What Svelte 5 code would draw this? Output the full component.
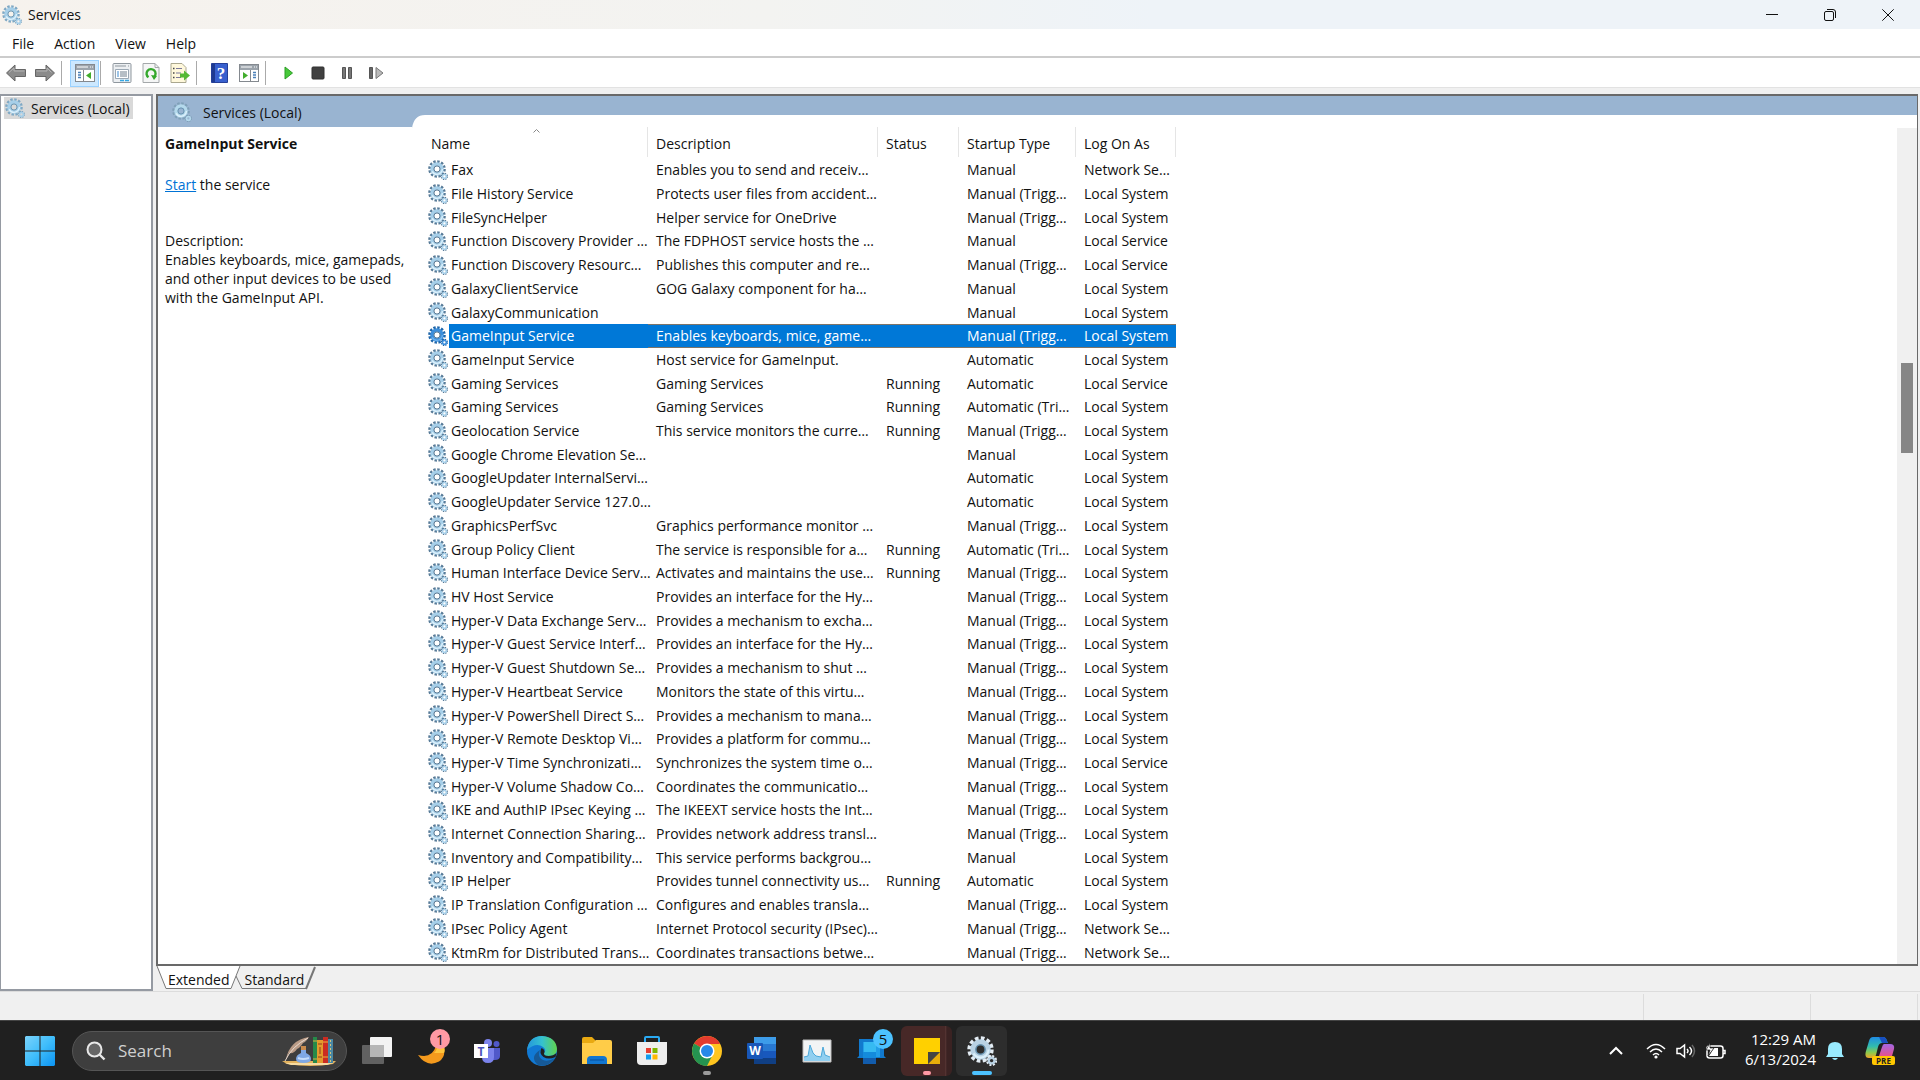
<script>
	const services = [
		['Fax', 'Enables you to send and receiv…', '', 'Manual', 'Network Se…'],
		['File History Service', 'Protects user files from accident…', '', 'Manual (Trigg…', 'Local System'],
		['FileSyncHelper', 'Helper service for OneDrive', '', 'Manual (Trigg…', 'Local System'],
		['Function Discovery Provider …', 'The FDPHOST service hosts the …', '', 'Manual', 'Local Service'],
		['Function Discovery Resourc…', 'Publishes this computer and re…', '', 'Manual (Trigg…', 'Local Service'],
		['GalaxyClientService', 'GOG Galaxy component for ha…', '', 'Manual', 'Local System'],
		['GalaxyCommunication', '', '', 'Manual', 'Local System'],
		['GameInput Service', 'Enables keyboards, mice, game…', '', 'Manual (Trigg…', 'Local System'],
		['GameInput Service', 'Host service for GameInput.', '', 'Automatic', 'Local System'],
		['Gaming Services', 'Gaming Services', 'Running', 'Automatic', 'Local Service'],
		['Gaming Services', 'Gaming Services', 'Running', 'Automatic (Tri…', 'Local System'],
		['Geolocation Service', 'This service monitors the curre…', 'Running', 'Manual (Trigg…', 'Local System'],
		['Google Chrome Elevation Se…', '', '', 'Manual', 'Local System'],
		['GoogleUpdater InternalServi…', '', '', 'Automatic', 'Local System'],
		['GoogleUpdater Service 127.0…', '', '', 'Automatic', 'Local System'],
		['GraphicsPerfSvc', 'Graphics performance monitor …', '', 'Manual (Trigg…', 'Local System'],
		['Group Policy Client', 'The service is responsible for a…', 'Running', 'Automatic (Tri…', 'Local System'],
		['Human Interface Device Serv…', 'Activates and maintains the use…', 'Running', 'Manual (Trigg…', 'Local System'],
		['HV Host Service', 'Provides an interface for the Hy…', '', 'Manual (Trigg…', 'Local System'],
		['Hyper-V Data Exchange Serv…', 'Provides a mechanism to excha…', '', 'Manual (Trigg…', 'Local System'],
		['Hyper-V Guest Service Interf…', 'Provides an interface for the Hy…', '', 'Manual (Trigg…', 'Local System'],
		['Hyper-V Guest Shutdown Se…', 'Provides a mechanism to shut …', '', 'Manual (Trigg…', 'Local System'],
		['Hyper-V Heartbeat Service', 'Monitors the state of this virtu…', '', 'Manual (Trigg…', 'Local System'],
		['Hyper-V PowerShell Direct S…', 'Provides a mechanism to mana…', '', 'Manual (Trigg…', 'Local System'],
		['Hyper-V Remote Desktop Vi…', 'Provides a platform for commu…', '', 'Manual (Trigg…', 'Local System'],
		['Hyper-V Time Synchronizati…', 'Synchronizes the system time o…', '', 'Manual (Trigg…', 'Local Service'],
		['Hyper-V Volume Shadow Co…', 'Coordinates the communicatio…', '', 'Manual (Trigg…', 'Local System'],
		['IKE and AuthIP IPsec Keying …', 'The IKEEXT service hosts the Int…', '', 'Manual (Trigg…', 'Local System'],
		['Internet Connection Sharing…', 'Provides network address transl…', '', 'Manual (Trigg…', 'Local System'],
		['Inventory and Compatibility…', 'This service performs backgrou…', '', 'Manual', 'Local System'],
		['IP Helper', 'Provides tunnel connectivity us…', 'Running', 'Automatic', 'Local System'],
		['IP Translation Configuration …', 'Configures and enables transla…', '', 'Manual (Trigg…', 'Local System'],
		['IPsec Policy Agent', 'Internet Protocol security (IPsec)…', '', 'Manual (Trigg…', 'Network Se…'],
		['KtmRm for Distributed Trans…', 'Coordinates transactions betwe…', '', 'Manual (Trigg…', 'Network Se…']
	];

	const columns = ['Name', 'Description', 'Status', 'Startup Type', 'Log On As'];
	const menus = ['File', 'Action', 'View', 'Help'];

	let selected = $state(7);
	let tab = $state('Extended');
</script>

{#snippet gears(kind)}
	<svg class="gears {kind}" viewBox="0 0 20 20" aria-hidden="true">
		<circle class="teeth" cx="9" cy="9" r="7.2" stroke-width="3.2" stroke-dasharray="2.3 1.47" />
		<circle class="wheel" cx="9" cy="9" r="5" stroke-width="3.6" />
		<circle class="shine" cx="9" cy="9" r="5.4" stroke-width="1.4" stroke-dasharray="14 20" />
		<circle class="rim" cx="9" cy="9" r="3.1" stroke-width="1" />
		<circle class="teeth" cx="16.4" cy="16.4" r="2.9" stroke-width="1.6" stroke-dasharray="1.3 .98" />
		<circle class="wheel" cx="16.4" cy="16.4" r="1.9" stroke-width="1.5" />
	</svg>
{/snippet}

<div class="window">
	<header class="titlebar">
		<div class="title">{@render gears('')}<span>Services</span></div>
		<div class="controls">
			<button aria-label="Minimize"><svg width="12" height="12" viewBox="0 0 12 12"><path d="M0 5.5h12" /></svg></button>
			<button aria-label="Restore"
				><svg width="12" height="12" viewBox="0 0 12 12"
					><rect x=".5" y="2.5" width="9" height="9" rx="1.5" /><path d="M3 .5h6a2.5 2.5 0 0 1 2.5 2.5v6" /></svg
				></button
			>
			<button aria-label="Close"><svg width="12" height="12" viewBox="0 0 12 12"><path d="M.3.3l11.4 11.4M11.7.3L.3 11.7" /></svg></button>
		</div>
	</header>

	<nav class="menubar">
		{#each menus as menu}
			<button>{menu}</button>
		{/each}
	</nav>

	<div class="toolbar">
		<button aria-label="Back">
			<svg width="22" height="20" viewBox="0 0 22 20"><path d="M1.5 10L10 2v4.500h10.500v7H10V18z" fill="#8b8b8b" stroke="#666" /><path d="M4 9.500L9 5v3h10.500" fill="none" stroke="#b5b5b5" /></svg>
		</button>
		<button aria-label="Forward">
			<svg width="22" height="20" viewBox="0 0 22 20"><path d="M20.500 10L12 2v4.500H1.500v7H12V18z" fill="#8b8b8b" stroke="#666" /><path d="M2.500 8H13V5l4.500 4.500" fill="none" stroke="#b5b5b5" /></svg>
		</button>
		<i class="sep"></i>
		<button class="pressed" aria-label="Show console tree">
			<svg width="20" height="18" viewBox="0 0 20 18"><rect x=".5" y=".5" width="19" height="17" fill="#fff" stroke="#84898f" /><path d="M1 1h18v5H1z" fill="#9ca4ac" /><path d="M2 3h11M15 3h1M17 3h1" stroke="#fff" /><path d="M3 8.500h3M3 11h3M3 13.500h3" stroke="#4a7fb8" stroke-width="1.400" /><path d="M8.500 6v11" stroke="#84898f" /><path d="M16 8v7l-5-3.500z" fill="#41ad2c" /></svg>
		</button>
		<i class="sep tight"></i>
		<button aria-label="Properties">
			<svg width="20" height="20" viewBox="0 0 20 20"><rect x="1" y=".5" width="18" height="19" rx="1" fill="#eceff2" stroke="#8f979e" /><path d="M3 3h11M16 3h1" stroke="#8f979e" /><path d="M3.500 6.500h13v9h-13z" fill="#fff" stroke="#9ba8b4" /><path d="M5 9h2M5 11h2M5 13h2" stroke="#3a89cf" /><path d="M8 9h7M8 11h7M8 13h7" stroke="#6f7e8c" /><path d="M8 17.500h4M13 17.500h4" stroke="#35a7e3" stroke-width="1.500" /></svg>
		</button>
		<button aria-label="Refresh">
			<svg width="18" height="20" viewBox="0 0 18 20"><path d="M1 .5h12l4 4v15H1z" fill="#f5f6f6" stroke="#a4a8aa" /><path d="M13 .5v4h4" fill="none" stroke="#a4a8aa" /><path d="M6.500 14.300A4.500 4.500 0 1 1 12 14" fill="none" stroke="#35a82d" stroke-width="2.400" /><path d="M9 12l6 1-3 4z" fill="#35a82d" /></svg>
		</button>
		<button aria-label="Export list">
			<svg width="20" height="20" viewBox="0 0 20 20"><path d="M1 .5h11l4 4v15H1z" fill="#fff8dc" stroke="#aaa78f" /><path d="M3 5.500h1.500M3 10h1.500M3 14.500h1.500" stroke="#444" stroke-width="1.400" /><path d="M6 5.500h6M6 10h5M6 14.500h5" stroke="#7b789b" stroke-width="1.200" /><path d="M10 10.500h4v-3l6 5-6 5v-3h-4z" fill="#55b935" /></svg>
		</button>
		<i class="sep"></i>
		<button aria-label="Help">
			<svg width="17" height="20" viewBox="0 0 17 20"><path d="M.5.5h16v19H.5z" fill="#3860ce" stroke="#253f98" /><path d="M1 1h3v18H1z" fill="#1e3a91" /><text x="10" y="16" text-anchor="middle" class="q">?</text></svg>
		</button>
		<button aria-label="Show action pane">
			<svg width="20" height="18" viewBox="0 0 20 18"><rect x=".5" y=".5" width="19" height="17" fill="#fff" stroke="#84898f" /><path d="M1 1h18v5H1z" fill="#9ca4ac" /><path d="M2 3h11M15 3h1M17 3h1" stroke="#fff" /><path d="M14 8.500h3M14 11h3M14 13.500h3" stroke="#4a7fb8" stroke-width="1.400" /><path d="M11.500 6v11" stroke="#84898f" /><path d="M4 8v7l5-3.500z" fill="#41ad2c" /></svg>
		</button>
		<i class="sep"></i>
		<button aria-label="Start service"><svg width="12" height="14" viewBox="0 0 12 14"><path d="M2 1v12l7.500-6z" fill="#47c93a" stroke="#2b9e25" /></svg></button>
		<button aria-label="Stop service"><svg width="14" height="14" viewBox="0 0 14 14"><rect x="1" y="1" width="12" height="12" rx="1" fill="#404040" stroke="#303030" /></svg></button>
		<button aria-label="Pause service"><svg width="12" height="14" viewBox="0 0 12 14"><path d="M1.500 1.500h3v11h-3zM7.500 1.500h3v11h-3z" fill="#777" stroke="#555" /></svg></button>
		<button aria-label="Restart service"><svg width="16" height="14" viewBox="0 0 16 14"><path d="M1.500 1.500h3v11h-3z" fill="#666" stroke="#555" /><path d="M8 1.500v11l7-5.500z" fill="#bbb" stroke="#777" /></svg></button>
	</div>

	<main>
		<aside class="tree">
			<button>{@render gears('')}<span>Services (Local)</span></button>
		</aside>

		<section class="content">
			<div class="pane">
				<div class="band">{@render gears('light')}<span>Services (Local)</span></div>
				<div class="details">
					<h1>GameInput Service</h1>
					<p class="action"><a href="#start">Start</a> the service</p>
					<p>Description:<br />Enables keyboards, mice, gamepads, and other input devices to be used with the GameInput API.</p>
				</div>
				<div class="list">
					<svg class="corner" width="13" height="13" viewBox="0 0 13 13" aria-hidden="true"><path d="M0 0h13Q2 0 0 13z" /></svg>
					<table>
						<thead>
							<tr>
								{#each columns as column, i}
									<th class="c{i}">
										{column}
										{#if i === 0}
											<svg class="sort" width="7" height="4" viewBox="0 0 7 4"><path d="M.5 3.500l3-3 3 3" /></svg>
										{/if}
									</th>
								{/each}
							</tr>
						</thead>
						<tbody>
							{#each services as service, row}
								<tr class:selected={selected === row} onclick={() => (selected = row)}>
									{#each service as value, i}
										<td>
											{#if i === 0}
												<div class="name">{@render gears('row')}<span>{value}</span></div>
											{:else}
												{value}
											{/if}
										</td>
									{/each}
								</tr>
							{/each}
						</tbody>
					</table>
					<div class="scrollbar"><div class="thumb"></div></div>
				</div>
			</div>

			<div class="tabs">
				<svg width="320" height="25" viewBox="0 0 320 25" aria-hidden="true">
					<path d="M80 10l6 12.500h64" fill="none" stroke="#777" />
					<path d="M150 23L159 1" fill="none" stroke="#777" stroke-width="2" />
					<path d="M1 0l9 22.500h65L84 0z" fill="#fff" />
					<path d="M1 0l9 22.500h65L84 0" fill="none" stroke="#777" />
				</svg>
				<button aria-pressed={tab === 'Extended'} onclick={() => (tab = 'Extended')}>Extended</button>
				<button aria-pressed={tab === 'Standard'} onclick={() => (tab = 'Standard')}>Standard</button>
			</div>
		</section>
	</main>

	<footer class="status"><i></i><i></i><i></i></footer>

	<div class="taskbar">
		<div class="apps">
			<button class="start" aria-label="Start">
				<svg width="30" height="30" viewBox="0 0 30 30"><defs><linearGradient id="win" x2="1" y2="1"><stop stop-color="#7bd3fb" /><stop offset=".5" stop-color="#3fbdfb" /><stop offset="1" stop-color="#0b93f2" /></linearGradient></defs><path d="M1 0h13.500v14.500H0V1zM15.500 0H29l1 1v13.500H15.500zM0 15.500h14.500V30H1l-1-1zM15.500 15.500H30V29l-1 1H15.500z" fill="url(#win)" /></svg>
			</button>
			<label class="search">
				<svg width="20" height="20" viewBox="0 0 20 20" fill="none"><circle cx="8.500" cy="8.500" r="7" fill="#666" stroke="#e8e8e8" stroke-width="2" /><path d="M13.500 13.500l5 5" stroke="#e8e8e8" stroke-width="2.400" /></svg>
				<input type="text" placeholder="Search" aria-label="Search" />
				<svg width="57" height="32" viewBox="0 0 57 32">
					<path d="M1 26h54l-3 3q-22 4-46 0z" fill="#e3b25e" /><path d="M4 28h48l-6 2H10z" fill="#f7dba1" />
					<path d="M5 24Q9 5 28 2q-3 5-6 6-3 5-6 6-3 5-8 4z" fill="#b99b86" /><path d="M4 26Q11 11 27 3" fill="none" stroke="#eadbd0" />
					<path d="M20 14h5v4q5 2 5 6 0 4-7.500 4T15 24q0-4 5-6z" fill="#7fa8e5" /><path d="M17 23q5 2 11 0" stroke="#c5dcfa" stroke-width="2" fill="none" /><path d="M20 11h5v4h-5z" fill="#c98b4d" />
					<path d="M32 2h4v26h-4z" fill="#268a49" /><path d="M32 6h4M32 24h4" stroke="#d8b042" /><path d="M36 5h6v23h-6z" fill="#e39a2d" /><path d="M37 9h4M37 22h4M39 12v7" stroke="#8f3c18" /><path d="M42 2h5v26h-5z" fill="#cb2c22" /><path d="M42 7h5M42 22h5" stroke="#eeb33d" /><path d="M47 4h5v24h-5z" fill="#4a88a4" /><path d="M49.500 5v22" stroke="#d6c37d" stroke-dasharray="2 2" />
				</svg>
			</label>
			<button aria-label="Task view"><svg width="32" height="30" viewBox="0 0 32 30"><rect x="9" y="1" width="22" height="20" rx="1" fill="#f3f3f3" /><rect x="1" y="9" width="22" height="19" rx="1" fill="#777" fill-opacity=".75" /><path d="M9 9h14v12H9z" fill="#b6b6b6" /></svg></button>
			<button aria-label="Weather"><svg width="30" height="30" viewBox="0 0 30 30"><path d="M26 9Q30 20 22 25.500 10 32 1 19q14 4 18-9z" fill="#f49a1d" /><path d="M20 12l6-4q3 6 1 9H17q2-1 3-5z" fill="#ffc43b" /></svg><b class="badge pink">1</b></button>
			<button aria-label="Teams"><svg width="30" height="30" viewBox="0 0 30 30"><circle cx="16" cy="7" r="4" fill="#7b83eb" /><circle cx="24.500" cy="8" r="3" fill="#5059c9" /><path d="M19 12h9v8q0 4-5 4h-4z" fill="#5059c9" /><path d="M10 12h12v9q0 6-6 6t-6-6z" fill="#7b83eb" /><path d="M2 8h14v14H2z" fill="#fff" /><text x="9" y="20" text-anchor="middle" class="t">T</text></svg></button>
			<button aria-label="Edge"><svg width="30" height="30" viewBox="0 0 30 30"><defs><linearGradient id="edge"><stop stop-color="#2496dc" /><stop offset=".5" stop-color="#35c1d0" /><stop offset="1" stop-color="#61d44c" /></linearGradient></defs><circle cx="15" cy="15" r="15" fill="#1179d4" /><path d="M0 14Q2 0 15 0q14 1 15 13 0 7-8 7-6 0-5-3 3-3-1-6Q9 6 0 14z" fill="url(#edge)" /><path d="M13 14q-3 7 3 10 5 2 12-2-7 10-17 7-9-8 2-15z" fill="#165997" /><path d="M14.500 12q3 1 3 4-2 4 4 4 5 0 8-3l-1 4q-7 3-12 0-5-4-2-9z" fill="#202020" /></svg></button>
			<button aria-label="File Explorer"><svg width="30" height="28" viewBox="0 0 30 28"><path d="M0 2q0-2 2-2h8l4 4h15v7H0z" fill="#e9a911" /><path d="M0 6h11l3-3h14q2 0 2 2v22H0z" fill="#ffcc48" /><path d="M5 27v-4q0-4 4-4h12q4 0 4 4v4z" fill="#1276d0" /><path d="M8 23h14" stroke="#064e9b" /></svg></button>
			<button aria-label="Microsoft Store"><svg width="30" height="30" viewBox="0 0 30 30"><path d="M8 7V2q0-1 1-1h12q1 0 1 1v5" fill="none" stroke="#29a9f2" stroke-width="2" /><path d="M0 6h30v19q0 4-4 4H4q-4 0-4-4z" fill="#eee" /><path d="M9 12h5v5H9z" fill="#e83e30" /><path d="M15.500 12h5v5h-5z" fill="#7db700" /><path d="M9 18.500h5v5H9z" fill="#119def" /><path d="M15.500 18.500h5v5h-5z" fill="#ffb800" /></svg></button>
			<button class="running" aria-label="Chrome"><svg width="30" height="30" viewBox="0 0 30 30"><circle cx="15" cy="15" r="15" fill="#ffc51f" /><path d="M15 15L2 7.500Q7 0 15 0q9 0 13 8H15z" fill="#e33b2e" /><path d="M15 15L2 7.500Q-2 15 2 22.500 6 30 15 30l6-12z" fill="#259350" /><circle cx="15" cy="15" r="7.500" fill="#fff" /><circle cx="15" cy="15" r="6" fill="#2788e8" /></svg></button>
			<button aria-label="Word"><svg width="30" height="28" viewBox="0 0 30 28"><path d="M7 0h22v7H7z" fill="#3d9ce9" /><path d="M7 7h22v7H7z" fill="#2878d1" /><path d="M7 14h22v7H7z" fill="#1858bd" /><path d="M7 21h22v6H7z" fill="#103f84" /><rect y="6" width="16" height="16" rx="1" fill="#1857b8" /><text x="8" y="18" text-anchor="middle" class="w">W</text></svg></button>
			<button aria-label="Resource Monitor"><svg width="30" height="24" viewBox="0 0 30 24"><path d="M1 1h28v22H1z" fill="#f2f4f5" stroke="#bbb" /><path d="M2 18l4-1 2-11 3 8 3 3 5 1 2-10 2 8 5 2v4H2z" fill="#91cff0" /><path d="M2 18l4-1 2-11 3 8 3 3 5 1 2-10 2 8 5 2" fill="none" stroke="#4ca8da" /></svg></button>
			<button aria-label="Phone Link"><svg width="30" height="28" viewBox="0 0 30 28"><path d="M2 2h25v17l2 2H0l2-2z" fill="#1179cd" /><path d="M6 5h17v15H6z" fill="#219ee8" /><path d="M7 5h12v10H7z" fill="#36baf1" /><path d="M6 15h13v7H6z" fill="#148bdc" /><path d="M6 21h13v6H6z" fill="#125cac" /></svg><b class="badge blue">5</b></button>
			<button class="notes" aria-label="Sticky Notes"><svg width="26" height="26" viewBox="0 0 26 26"><path d="M0 0h26v14L14 26H0z" fill="#ffd000" /><path d="M26 14v12H14z" fill="#e9ad0a" /><path d="M14 14h12L14 26z" fill="#444" /></svg></button>
			<button class="active" aria-label="Services">{@render gears('big')}</button>
		</div>

		<div class="tray">
			<button aria-label="Show hidden icons"><svg width="14" height="9" viewBox="0 0 14 9"><path d="M1 8l6-6 6 6" /></svg></button>
			<button class="network" aria-label="Network">
				<svg width="20" height="16" viewBox="0 0 20 16"><path d="M1 6q9-9 18 0M4 9q6-6 12 0M7 12q3-3 6 0" /><circle cx="10" cy="14" r="1.600" fill="#fff" stroke="none" /></svg>
				<svg width="20" height="16" viewBox="0 0 20 16"><path d="M1 5.500h3L8.500 2v12L4 10.500H1zM11 6q2 2 0 4M13.500 4q4 4 0 8" /><path d="M16 2q5 6 0 12" stroke="#666" /></svg>
				<svg width="20" height="16" viewBox="0 0 20 16"><rect x="1" y="3" width="16" height="12" rx="2.500" /><path d="M17 7.500h2v3h-2" /><path d="M8 5h4v8H3z" fill="#fff" stroke="none" /><path d="M4 0L0 7h4l-2 6 6-8H4z" fill="#fff" stroke="#202020" stroke-width=".7" /></svg>
			</button>
			<button class="clock"><time>12:29 AM</time><time>6/13/2024</time></button>
			<button class="bell" aria-label="Notifications"><svg width="18" height="20" viewBox="0 0 18 20"><path d="M2 8q0-7 7-7t7 7v5l2 3H0l2-3z" /><path d="M6 17h6q-3 4-6 0z" /></svg></button>
			<button class="copilot" aria-label="Copilot">
				<svg width="30" height="30" viewBox="0 0 30 30"><defs><linearGradient id="co" x2="0" y2="1"><stop stop-color="#1f8ce5" /><stop offset=".45" stop-color="#32bcad" /><stop offset=".75" stop-color="#90c94a" /><stop offset="1" stop-color="#f0a42a" /></linearGradient><linearGradient id="co2" x2="0" y2="1"><stop stop-color="#a267e4" /><stop offset="1" stop-color="#e5528e" /></linearGradient></defs><path d="M8 1h10q3 0 4 4l1 2h-6q-3 0-4 4l-2 8q-1 3-4 3H4q-5 0-3-7L4 5q1-4 4-4z" fill="url(#co)" /><path d="M14 1h4q3 0 4 4l1 2h-6z" fill="#174fc0" /><path d="M19 8h6q5 0 4 5l-2 7H14l3-9q1-3 2-3z" fill="url(#co2)" /><rect x="7" y="20" width="23" height="9" rx="2" fill="#ffc700" /><text x="18.500" y="27.500" text-anchor="middle" class="pre">PRE</text></svg>
			</button>
		</div>
	</div>
</div>

<style>
	:global(body) {
		background: #f0f0f0;
	}
	.window {
		min-height: 100vh;
		display: flex;
		flex-direction: column;
		box-sizing: border-box;
		font-family: 'Open Sans', 'Noto Sans', sans-serif;
		font-size: 14px;
		color: #111;
		line-height: 19px;
	}
	button {
		font: inherit;
		color: inherit;
		background: none;
		border: 0;
		padding: 0;
		display: flex;
		align-items: center;
		justify-content: center;
		cursor: default;
	}
	svg {
		display: block;
		flex: none;
	}
	p,
	h1 {
		margin: 0;
	}

	.gears {
		width: 20px;
		height: 20px;
		fill: none;
	}
	.teeth {
		stroke: #7fa8c4;
	}
	.wheel {
		stroke: #a6cfe9;
	}
	.shine {
		stroke: #dcf0fb;
	}
	.rim {
		stroke: #6894b1;
	}
	.row .teeth {
		stroke: #587b98;
	}
	.row .rim {
		stroke: #4f728f;
	}
	.light .teeth {
		stroke: #7fa0b8;
	}
	.light .wheel {
		stroke: #b4d9ec;
	}
	.selected .teeth {
		stroke: #1f66aa;
	}
	.selected .wheel {
		stroke: #3b8edb;
	}
	.selected .shine {
		stroke: #6bb1ee;
	}
	.big {
		width: 30px;
		height: 30px;
	}
	.big .teeth {
		stroke: #e4edf4;
	}
	.big .wheel {
		stroke: #b9d2e4;
	}

	.titlebar {
		height: 29px;
		display: flex;
		justify-content: space-between;
		background: linear-gradient(90deg, #f6f2ed, #f3f3f1 40%, #eef3f8 60%);
	}
	.title {
		display: flex;
		align-items: center;
		gap: 6px;
		padding-left: 2px;
	}
	.controls {
		display: flex;
		padding-right: 3px;
	}
	.controls button {
		width: 58px;
	}
	.controls svg {
		fill: none;
		stroke: #111;
	}

	.menubar {
		height: 27px;
		box-sizing: border-box;
		display: flex;
		gap: 20px;
		padding: 2px 0 0 12px;
		background: #fff;
	}
	.toolbar {
		height: 28px;
		display: flex;
		align-items: center;
		padding: 1px 0 0 1px;
		background: #fff;
		border-top: 2px solid #ccc;
		border-bottom: 1px solid #e2e2e2;
	}
	.toolbar button {
		width: 29px;
		height: 27px;
	}
	.toolbar .pressed {
		box-sizing: border-box;
		background: #cce8ff;
		border: 1px solid #99d1ff;
	}
	.sep {
		width: 1px;
		height: 24px;
		background: #aaa;
		margin: 0 8px 0 2px;
	}
	.sep.tight {
		margin: 0 6px 0 1px;
	}
	.q {
		font: bold 17px 'Liberation Serif', serif;
		fill: #fff;
	}

	main {
		flex: 1;
		display: flex;
		gap: 3px;
		padding: 6px 2px 0 0;
	}
	.tree {
		width: 153px;
		box-sizing: border-box;
		border: 2px solid #959aa2;
		border-left-width: 1px;
		background: #fff;
		padding: 1px 3px;
	}
	.tree button {
		background: #d9d9d9;
		gap: 6px;
		padding: 1px 3px 1px 1px;
		white-space: nowrap;
	}
	.content {
		flex: 1;
		display: flex;
		flex-direction: column;
	}
	.pane {
		flex: 1;
		display: grid;
		grid-template-columns: 254px 1fr;
		grid-template-rows: 31px 1fr;
		border: 2px solid #696969;
		border-right-width: 1px;
		background: #fff;
	}
	.band {
		background: #99b4d1;
		display: flex;
		align-items: center;
		gap: 11px;
		padding: 1px 0 0 14px;
	}
	.details {
		padding: 7px 0 0 7px;
	}
	.details h1 {
		font-size: 14px;
		line-height: 19px;
	}
	.action {
		margin: 22px 0 37px;
	}
	a {
		color: #0073d5;
	}
	.list {
		grid-column: 2;
		grid-row: 1 / 3;
		position: relative;
		display: flex;
		justify-content: space-between;
		border-top: 19px solid #99b4d1;
	}
	.corner {
		position: absolute;
		left: 0;
		top: 0;
		fill: #99b4d1;
	}
	table {
		width: 764px;
		height: 100%;
		border-collapse: collapse;
		table-layout: fixed;
		white-space: nowrap;
	}
	th,
	td {
		padding: 0 0 0 8px;
		text-align: left;
		font-weight: normal;
	}
	thead tr {
		height: 43px;
	}
	th {
		position: relative;
		box-sizing: border-box;
		padding-top: 14px;
		background: linear-gradient(#e5e5e5, #e5e5e5) right 12px / 1px 30px no-repeat;
	}
	.c0 {
		width: 236px;
		padding-left: 19px;
	}
	.c1 {
		width: 230px;
	}
	.c2 {
		width: 81px;
	}
	.c3 {
		width: 117px;
	}
	.sort {
		position: absolute;
		left: 121px;
		top: 14px;
		fill: none;
		stroke: #888;
	}
	td:first-child {
		padding-left: 16px;
	}
	.name {
		display: flex;
		align-items: center;
		gap: 2px;
	}
	.name span {
		padding: 0 1px;
	}
	.selected td {
		color: #fff;
		background: #0078d7;
		box-shadow: inset 0 1px #7d7468, inset 0 -1px #7d7468;
	}
	.selected td:first-child {
		background: linear-gradient(90deg, transparent 37px, #0078d7 37px);
		box-shadow: none;
	}
	.scrollbar {
		width: 20px;
		margin-top: 13px;
		background: #f0f0f0;
	}
	.thumb {
		width: 12px;
		height: 90px;
		margin: 235px 0 0 4px;
		background: #868686;
	}

	.tabs {
		height: 25px;
		position: relative;
		display: flex;
		gap: 15px;
		padding-left: 12px;
	}
	.tabs svg {
		position: absolute;
		left: 0;
		top: 0;
	}
	.tabs button {
		position: relative;
		padding-top: 2px;
	}

	.status {
		height: 29px;
		box-sizing: border-box;
		display: flex;
		justify-content: flex-end;
		border-top: 1px solid #dcdcdc;
		padding: 2px 2px 0 0;
	}
	.status i {
		width: 106px;
		border-left: 1px solid #dcdcdc;
	}
	.status i:first-child {
		width: 166px;
	}
	.status i:last-child {
		width: 0;
	}

	.taskbar {
		height: 60px;
		box-sizing: border-box;
		border-top: 1px solid #444;
		background: #202020;
		color: #fff;
		display: flex;
		justify-content: space-between;
	}
	.apps,
	.tray {
		display: flex;
		align-items: center;
	}
	.apps {
		padding-left: 15px;
	}
	.apps button {
		position: relative;
		width: 51px;
		height: 50px;
		margin-right: 4px;
		border-radius: 6px;
	}
	.apps .start {
		width: 50px;
		margin-right: 7px;
	}
	.search {
		width: 275px;
		height: 40px;
		box-sizing: border-box;
		display: flex;
		align-items: center;
		background: #3e3e3e;
		border: 1px solid #555;
		border-radius: 20px;
		padding: 0 8px 0 13px;
		margin-right: 4px;
	}
	.search input {
		flex: 1;
		min-width: 0;
		background: none;
		border: 0;
		outline: 0;
		padding: 0 0 0 12px;
		font: inherit;
		font-size: 17px;
		color: #ddd;
	}
	.search input::placeholder {
		color: #d0d0d0;
		opacity: 1;
	}
	.badge {
		position: absolute;
		top: 3px;
		width: 20px;
		height: 20px;
		border-radius: 50%;
		font-size: 15px;
		font-weight: normal;
		line-height: 20px;
		color: #111;
	}
	.pink {
		right: 7px;
		background: #ff99a4;
	}
	.blue {
		right: 4px;
		background: #4cc2ff;
	}
	.running::after,
	.notes::after,
	.active::after {
		content: '';
		position: absolute;
		bottom: 1px;
		width: 8px;
		height: 4px;
		border-radius: 2px;
		background: #9a9a9a;
	}
	.apps .notes {
		background: linear-gradient(90deg, #472827 44px, #5b3836 44px, #3a2222 46px);
	}
	.notes::after {
		background: #ff99a4;
	}
	.apps .active {
		background: #2d2d2d;
	}
	.active::after {
		width: 20px;
		background: #4cc2ff;
	}
	.t {
		font: bold 12px 'Open Sans', sans-serif;
		fill: #4b53bc;
	}
	.w {
		font: bold 12px 'Open Sans', sans-serif;
		fill: #fff;
	}
	.pre {
		font: bold 8px 'Open Sans', sans-serif;
		fill: #222;
	}
	.tray {
		padding-right: 25px;
	}
	.tray svg {
		fill: none;
		stroke: #fff;
		stroke-width: 2;
	}
	.network {
		gap: 10px;
		margin-left: 23px;
	}
	.tray .network svg {
		stroke-width: 1.5;
	}
	.clock {
		flex-direction: column;
		align-items: flex-end;
		width: 90px;
		padding-bottom: 3px;
		font-size: 15px;
		line-height: 20px;
	}
	.tray .bell svg {
		fill: #99ebff;
		stroke: none;
	}
	.bell {
		margin: 0 21px 0 10px;
	}
	.tray .copilot svg {
		stroke: none;
	}
</style>
